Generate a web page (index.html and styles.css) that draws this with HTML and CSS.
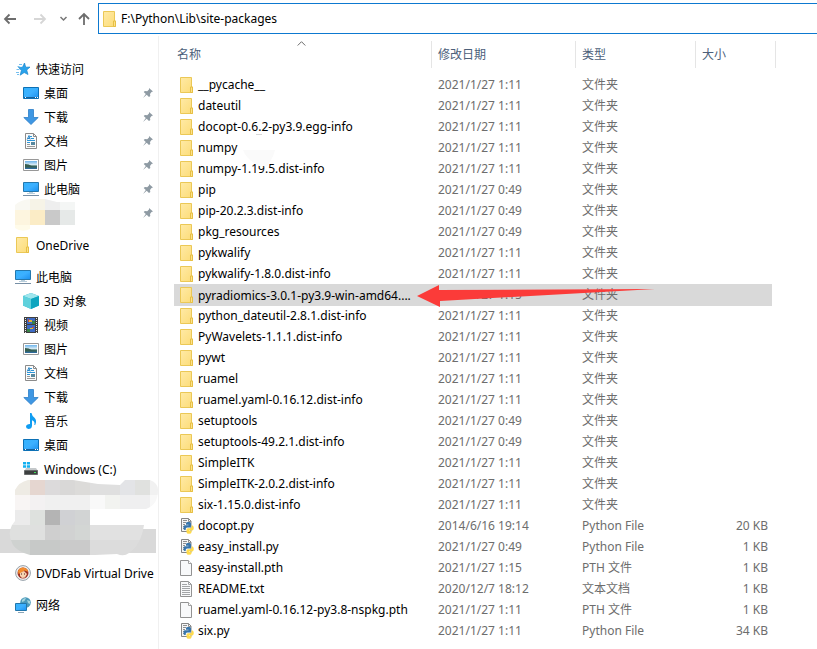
FILE: index.html
```html
<!DOCTYPE html>
<html lang="zh-CN">
<head>
    <meta charset="UTF-8">
    <meta name="viewport" content="width=device-width, initial-scale=1.0">
    <title>site-packages</title>
    <link rel="stylesheet" href="styles.css">
</head>
<body>
    <!-- 图标 -->
    <svg class="defs" width="0" height="0">
        <defs>
            <linearGradient id="gFolder" x1="0" y1="0" x2="1" y2="1"><stop offset="0" stop-color="#ffeaa6"/><stop offset="1" stop-color="#fcdc78"/></linearGradient>
            <linearGradient id="gBlue" x1="0" y1="0" x2="1" y2="1"><stop offset="0" stop-color="#35b4fd"/><stop offset=".5" stop-color="#3cb0ff"/><stop offset="1" stop-color="#1a8fee"/></linearGradient>
            <linearGradient id="gSky" x1="0" y1="0" x2="0" y2="1"><stop offset="0" stop-color="#6db4ec"/><stop offset=".5" stop-color="#e2f0f6"/><stop offset=".6" stop-color="#3f6e66"/><stop offset="1" stop-color="#2c6aa5"/></linearGradient>
        </defs>
        <symbol id="folder" viewBox="0 0 14 16">
            <path d="M.5.5h11v9.500h1v5.500H.5z" fill="url(#gFolder)" stroke="#ebc856"/>
            <path d="M10.500 15.500v-5.500h2v5.500z" fill="#fde28a" stroke="#e6bf45"/>
        </symbol>
        <symbol id="file" viewBox="0 0 14 16">
            <path d="M.5.500h8l3 3v12H.5z" fill="#f8f9fa" stroke="#929292"/>
            <path d="M8.500.500v3h3" fill="#fff" stroke="#a0a0a0"/>
        </symbol>
        <symbol id="text" viewBox="0 0 14 16">
            <path d="M.5.500h8l3 3v12H.5z" fill="#f8f9fa" stroke="#929292"/>
            <path d="M8.500.500v3h3M2 3.500h5M2 5.500h8M2 7.500h8M2 9.500h8M2 11.500h8M2 13.500h8" fill="none" stroke="#a3a5a7"/>
        </symbol>
        <symbol id="py" viewBox="0 0 14 16">
            <path d="M1.500.500h7l2.500 2.500v10.500H1.500z" fill="#f5f6f6" stroke="#858585"/>
            <path d="M8.500.500v3H11M3 2.500h4M3 4.500h3M3 6.500h2M3 8.500h2M3 10.500h2" fill="none" stroke="#8f8f8f"/>
            <path d="M6 5.300q0-1.300 2-1.300h1.500q1.500 0 1.500 1.500v2.500q0 1.500-1.500 1.500H7q-1.300 0-1.300 1.500v1H4.500Q3.500 12 3.500 9.500T5 7.300h3.500v-.600H6z" fill="#3875ab"/>
            <path d="M11.600 7.500h1q1.200.600 1.200 2.600t-1.300 2.300H9v.600h2.500v1.200q0 1.500-2.500 1.500t-2.500-1.500v-2.400q0-1.500 1.500-1.500h2.200q1.400 0 1.400-1.400z" fill="#ffdb4c"/>
        </symbol>
        <symbol id="star" viewBox="0 0 16 16">
            <path d="M9.500 2l1.200 4.200 4.300-.1-3.300 2.900 1.300 4.500-3.800-2-4 2.700 1.200-4.900L3.500 6.400l4-.1z" fill="#29a3ec" stroke="#1b85cb" stroke-width=".7"/>
            <path d="M4 3.500h3M2.500 5.500h2M1.500 8.500h3M1 11.500h3M2 13.500h2" stroke="#65b8ec" stroke-width=".9"/>
        </symbol>
        <symbol id="desktop" viewBox="0 0 16 16">
            <path d="M.5 2.500h15v11H.5z" fill="url(#gBlue)" stroke="#0c70b5"/>
            <path d="M1 12.500h14" stroke="#176099"/>
            <path d="M2 12.500h1M12 12.500h1M14 12.500h1" stroke="#fff"/>
        </symbol>
        <symbol id="down" viewBox="0 0 16 16">
            <path d="M5.500.500h5v8h4.700L8 15.500.800 8.500h4.700z" fill="#3f97e3" stroke="#2c7ec8" stroke-width=".8"/>
        </symbol>
        <symbol id="doc" viewBox="0 0 16 16">
            <path d="M2.500.500h8l3 3v12h-11z" fill="#fbfbfb" stroke="#8b8b8b"/>
            <path d="M10.500.500v3h3" fill="none" stroke="#8b8b8b"/>
            <path d="M7 3.500h2M4 7.500h8M8 5.500h3M4 9.500h3" stroke="#2e96d8"/>
            <path d="M4.200 6.500L6 2.500l1.200 4M4.800 5.500h2" stroke="#2a86c7" fill="none"/>
            <path d="M4 11.500h3M4 13.500h8" stroke="#999"/>
            <path d="M8 9h4v3H8z" fill="#58889e"/>
        </symbol>
        <symbol id="pic" viewBox="0 0 16 16">
            <path d="M.5 2.500h15v11H.5z" fill="#fff" stroke="#989898"/>
            <path d="M2 4h12v8H2z" fill="url(#gSky)"/>
            <path d="M2 7q4 0 7 2.200l5 .3v1H2z" fill="#365e51"/>
        </symbol>
        <symbol id="pc" viewBox="0 0 16 16">
            <path d="M.5 1.500h15v9H.5z" fill="url(#gBlue)" stroke="#2478ae"/>
            <path d="M6 11.500h4M4 12.500h8" stroke="#b9cedb"/>
            <path d="M0 14.500h16" stroke="#778fa5"/>
        </symbol>
        <symbol id="cube" viewBox="0 0 16 16">
            <path d="M8 0l8 3v9.500L8 16 0 12.500V3z" fill="#25b3cc"/>
            <path d="M0 3l8-3 8 3-8 3z" fill="#a0e6ed"/>
            <path d="M0 3l8 3v10l-8-3.500z" fill="#5fd1dc"/>
            <path d="M8 6l8-3v9.500L8 16z" fill="#0ea5bf"/>
        </symbol>
        <symbol id="film" viewBox="0 0 16 16">
            <path d="M1 0h14v16H1z" fill="#404040"/>
            <path d="M2.500 1v15M13.500 1v15" stroke="#eee" stroke-dasharray="1 1"/>
            <path d="M4 1h8v6H4zM4 8h8v7H4z" fill="#3d6ac4"/>
            <path d="M6 3h3v2H6zM7 11h3v1H7z" fill="#e4b53a"/>
            <path d="M9 4h3v3H9zM4 12h3v3H4z" fill="#378247"/>
            <path d="M5 2h1v3H5zM9 10h2v1H9z" fill="#cf4c35"/>
        </symbol>
        <symbol id="music" viewBox="0 0 16 16">
            <path d="M7 0h1.500q.5 3 3 4.800 2.800 2.700.7 7.200h-.9q1-3.500-2.300-4.800v5.500Q8.700 16 5.500 16 3 15.800 3 13.700 3.200 11 7 11z" fill="#109df2"/>
        </symbol>
        <symbol id="drive" viewBox="0 0 16 16">
            <path d="M0 1h3v2.500H0zM3.800 1H7v2.500H3.800zM0 4.300h3v2.500H0zM3.800 4.300H7v2.500H3.800z" fill="#13b0f0"/>
            <path d="M3 7h10l2 3H1.500z" fill="#c4c8ca"/>
            <path d="M1.500 9.500h13v4h-13z" fill="#3d3f40" stroke="#676a6b"/>
            <path d="M11 11.500h2" stroke="#3fdf5c"/>
        </symbol>
        <symbol id="dvd" viewBox="0 0 16 16">
            <circle cx="8" cy="8" r="7.400" fill="#f4f2f0" stroke="#95a0a9"/>
            <circle cx="8" cy="8" r="5.500" fill="#9c2f22"/>
            <path d="M3 6q2-4 6-3.300 4 .8 4 4L9.500 5.500 7 7.500 3.500 9z" fill="#f28c2e"/>
            <path d="M5 8l4-2 3 3-2 3.500-3 .5-2-2z" fill="#f7d3b1"/>
            <path d="M6 8.500h1v1H6zM9 8.500h1v1H9z" fill="#4f211b"/>
        </symbol>
        <symbol id="net" viewBox="0 0 16 16">
            <circle cx="10.500" cy="5.500" r="5.300" fill="#4b9abb"/>
            <path d="M7 3q2-2.300 4-2l-1.500 3L7 5zM12 3l3 1v3l-2-1z" fill="#a3d4de"/>
            <path d="M.5 6.500h11v7H.5z" fill="url(#gBlue)" stroke="#2276ab"/>
            <path d="M3 15.500h6" stroke="#8ba6b8"/>
        </symbol>
        <symbol id="pin" viewBox="0 0 10 10">
            <path d="M6 0l4 3.500-1.500.500-1.500 2 .3 2L6 9 3.700 6.800 0 10l2.800-4L.7 4l1.200-1 2.300.200L6 1.500z" fill="#8e9aa3"/>
        </symbol>
    </svg>

    <!-- 地址栏 -->
    <div class="topbar">
        <svg class="arrows" width="98" height="36" fill="none">
            <path d="M5 19h11M9.500 14.500L5 19l4.500 4.500" stroke="#6d6d6d" stroke-width="1.800"/>
            <path d="M34 19h11M40.500 14.500L45 19l-4.500 4.500" stroke="#d6d6d6" stroke-width="1.800"/>
            <path d="M60.500 17l3 3 3-3" stroke="#777" stroke-width="1.500"/>
            <path d="M84 25V14M79 19l5-5 5 5" stroke="#6d6d6d" stroke-width="1.800"/>
        </svg>
        <div class="address">
            <svg class="ico-file"><use href="#folder"/></svg>
            <span>F:\Python\Lib\site-packages</span>
        </div>
    </div>

    <div class="main">
        <!-- 左侧导航 -->
        <div class="sidebar">
            <div class="item"><svg class="ico"><use href="#star"/></svg><span>快速访问</span></div>
            <div class="item sub"><svg class="ico"><use href="#desktop"/></svg><span>桌面</span><svg class="pin"><use href="#pin"/></svg></div>
            <div class="item sub"><svg class="ico"><use href="#down"/></svg><span>下载</span><svg class="pin"><use href="#pin"/></svg></div>
            <div class="item sub"><svg class="ico"><use href="#doc"/></svg><span>文档</span><svg class="pin"><use href="#pin"/></svg></div>
            <div class="item sub"><svg class="ico"><use href="#pic"/></svg><span>图片</span><svg class="pin"><use href="#pin"/></svg></div>
            <div class="item sub"><svg class="ico"><use href="#pc"/></svg><span>此电脑</span><svg class="pin"><use href="#pin"/></svg></div>
            <div class="item sub"><svg class="pin"><use href="#pin"/></svg></div>
            <div class="item group"><svg class="ico"><use href="#folder"/></svg><span class="onedrive">OneDrive</span></div>
            <div class="item group"><svg class="ico"><use href="#pc"/></svg><span>此电脑</span></div>
            <div class="item sub"><svg class="ico"><use href="#cube"/></svg><span>3D 对象</span></div>
            <div class="item sub"><svg class="ico"><use href="#film"/></svg><span>视频</span></div>
            <div class="item sub"><svg class="ico"><use href="#pic"/></svg><span>图片</span></div>
            <div class="item sub"><svg class="ico"><use href="#doc"/></svg><span>文档</span></div>
            <div class="item sub"><svg class="ico"><use href="#down"/></svg><span>下载</span></div>
            <div class="item sub"><svg class="ico"><use href="#music"/></svg><span>音乐</span></div>
            <div class="item sub"><svg class="ico"><use href="#desktop"/></svg><span>桌面</span></div>
            <div class="item sub"><svg class="ico"><use href="#drive"/></svg><span>Windows (C:)</span></div>
            <div class="item"></div>
            <div class="item"></div>
            <div class="item current"></div>
            <div class="item group"><svg class="ico"><use href="#dvd"/></svg><span>DVDFab Virtual Drive</span></div>
            <div class="item group"><svg class="ico"><use href="#net"/></svg><span>网络</span></div>
        </div>

        <!-- 文件列表 -->
        <div class="files">
            <div class="row head">
                <span class="name">名称</span><span class="date">修改日期</span><span class="type">类型</span><span class="size">大小</span>
                <svg class="sort" width="9" height="5"><path d="M.7 4.500l3.800-3.800 3.800 3.800" fill="none" stroke="#6a6a6a"/></svg>
            </div>
            <div class="row"><span class="name"><svg class="ico-file"><use href="#folder"/></svg>__pycache__</span><span class="date">2021/1/27 1:11</span><span class="type">文件夹</span><span class="size"></span></div>
            <div class="row"><span class="name"><svg class="ico-file"><use href="#folder"/></svg>dateutil</span><span class="date">2021/1/27 1:11</span><span class="type">文件夹</span><span class="size"></span></div>
            <div class="row"><span class="name"><svg class="ico-file"><use href="#folder"/></svg>docopt-0.6.2-py3.9.egg-info</span><span class="date">2021/1/27 1:11</span><span class="type">文件夹</span><span class="size"></span></div>
            <div class="row"><span class="name"><svg class="ico-file"><use href="#folder"/></svg>numpy</span><span class="date">2021/1/27 1:11</span><span class="type">文件夹</span><span class="size"></span></div>
            <div class="row"><span class="name"><svg class="ico-file"><use href="#folder"/></svg>numpy-1.19.5.dist-info</span><span class="date">2021/1/27 1:11</span><span class="type">文件夹</span><span class="size"></span></div>
            <div class="row"><span class="name"><svg class="ico-file"><use href="#folder"/></svg>pip</span><span class="date">2021/1/27 0:49</span><span class="type">文件夹</span><span class="size"></span></div>
            <div class="row"><span class="name"><svg class="ico-file"><use href="#folder"/></svg>pip-20.2.3.dist-info</span><span class="date">2021/1/27 0:49</span><span class="type">文件夹</span><span class="size"></span></div>
            <div class="row"><span class="name"><svg class="ico-file"><use href="#folder"/></svg>pkg_resources</span><span class="date">2021/1/27 0:49</span><span class="type">文件夹</span><span class="size"></span></div>
            <div class="row"><span class="name"><svg class="ico-file"><use href="#folder"/></svg>pykwalify</span><span class="date">2021/1/27 1:11</span><span class="type">文件夹</span><span class="size"></span></div>
            <div class="row"><span class="name"><svg class="ico-file"><use href="#folder"/></svg>pykwalify-1.8.0.dist-info</span><span class="date">2021/1/27 1:11</span><span class="type">文件夹</span><span class="size"></span></div>
            <div class="row selected"><span class="name"><svg class="ico-file"><use href="#folder"/></svg>pyradiomics-3.0.1-py3.9-win-amd64....</span><span class="date">2021/1/27 1:15</span><span class="type">文件夹</span><span class="size"></span></div>
            <div class="row"><span class="name"><svg class="ico-file"><use href="#folder"/></svg>python_dateutil-2.8.1.dist-info</span><span class="date">2021/1/27 1:11</span><span class="type">文件夹</span><span class="size"></span></div>
            <div class="row"><span class="name"><svg class="ico-file"><use href="#folder"/></svg>PyWavelets-1.1.1.dist-info</span><span class="date">2021/1/27 1:11</span><span class="type">文件夹</span><span class="size"></span></div>
            <div class="row"><span class="name"><svg class="ico-file"><use href="#folder"/></svg>pywt</span><span class="date">2021/1/27 1:11</span><span class="type">文件夹</span><span class="size"></span></div>
            <div class="row"><span class="name"><svg class="ico-file"><use href="#folder"/></svg>ruamel</span><span class="date">2021/1/27 1:11</span><span class="type">文件夹</span><span class="size"></span></div>
            <div class="row"><span class="name"><svg class="ico-file"><use href="#folder"/></svg>ruamel.yaml-0.16.12.dist-info</span><span class="date">2021/1/27 1:11</span><span class="type">文件夹</span><span class="size"></span></div>
            <div class="row"><span class="name"><svg class="ico-file"><use href="#folder"/></svg>setuptools</span><span class="date">2021/1/27 0:49</span><span class="type">文件夹</span><span class="size"></span></div>
            <div class="row"><span class="name"><svg class="ico-file"><use href="#folder"/></svg>setuptools-49.2.1.dist-info</span><span class="date">2021/1/27 0:49</span><span class="type">文件夹</span><span class="size"></span></div>
            <div class="row"><span class="name"><svg class="ico-file"><use href="#folder"/></svg>SimpleITK</span><span class="date">2021/1/27 1:11</span><span class="type">文件夹</span><span class="size"></span></div>
            <div class="row"><span class="name"><svg class="ico-file"><use href="#folder"/></svg>SimpleITK-2.0.2.dist-info</span><span class="date">2021/1/27 1:11</span><span class="type">文件夹</span><span class="size"></span></div>
            <div class="row"><span class="name"><svg class="ico-file"><use href="#folder"/></svg>six-1.15.0.dist-info</span><span class="date">2021/1/27 1:11</span><span class="type">文件夹</span><span class="size"></span></div>
            <div class="row"><span class="name"><svg class="ico-file"><use href="#py"/></svg>docopt.py</span><span class="date">2014/6/16 19:14</span><span class="type">Python File</span><span class="size">20 KB</span></div>
            <div class="row"><span class="name"><svg class="ico-file"><use href="#py"/></svg>easy_install.py</span><span class="date">2021/1/27 0:49</span><span class="type">Python File</span><span class="size">1 KB</span></div>
            <div class="row"><span class="name"><svg class="ico-file"><use href="#file"/></svg>easy-install.pth</span><span class="date">2021/1/27 1:15</span><span class="type">PTH 文件</span><span class="size">1 KB</span></div>
            <div class="row"><span class="name"><svg class="ico-file"><use href="#text"/></svg>README.txt</span><span class="date">2020/12/7 18:12</span><span class="type">文本文档</span><span class="size">1 KB</span></div>
            <div class="row"><span class="name"><svg class="ico-file"><use href="#file"/></svg>ruamel.yaml-0.16.12-py3.8-nspkg.pth</span><span class="date">2021/1/27 1:11</span><span class="type">PTH 文件</span><span class="size">1 KB</span></div>
            <div class="row"><span class="name"><svg class="ico-file"><use href="#py"/></svg>six.py</span><span class="date">2021/1/27 1:11</span><span class="type">Python File</span><span class="size">34 KB</span></div>
        </div>
    </div>

    <!-- 马赛克和红色箭头 -->
    <svg class="overlay" width="817" height="649">
        <clipPath id="blob1"><path d="M15 205q5-5 15-6h15l12 3 3 0h15v23H60l-30 1v3q-8 4-15-1z"/></clipPath>
        <g clip-path="url(#blob1)">
            <path d="M15 195h15v15H15z" fill="#f9f8f2"/><path d="M30 195h15v15H30z" fill="#f6f3e7"/><path d="M45 195h15v15H45z" fill="#eeeeee"/><path d="M60 195h15v15H60z" fill="#f4f6f5"/>
            <path d="M15 210h15v15H15z" fill="#fdf5df"/><path d="M30 210h15v15H30z" fill="#fbecc6"/><path d="M45 210h15v15H45z" fill="#c9c9c9"/><path d="M60 210h15v15H60z" fill="#e6e9e8"/>
            <path d="M15 225h15v6H15z" fill="#fffbe9"/>
        </g>
        <clipPath id="blob2"><path d="M15 490q4-8 13-10h45l25 4 22 1 5-5h25q8 3 8 10 0 15-12 19H90v16h54q-3 20-15 28-5 4-12 1l-22 1H30q-12-3-17-10-6-10-1-20l3-4z"/></clipPath>
        <g clip-path="url(#blob2)">
            <path d="M0 480h30v15H0z" fill="#eeebe4"/><path d="M30 480h15v15H30z" fill="#e5d6d0"/><path d="M45 480h15v15H45z" fill="#dcdadb"/><path d="M60 480h15v15H60z" fill="#d9d8d7"/><path d="M75 480h15v15H75z" fill="#dcdbd9"/><path d="M90 480h30v15H90z" fill="#dfdfdf"/><path d="M120 480h15v15h-15z" fill="#e3e4e7"/><path d="M135 480h15v15h-15z" fill="#e0e1df"/><path d="M150 480h15v15h-15z" fill="#f1f1f1"/>
            <path d="M0 495h30v15H0z" fill="#f8f5f4"/><path d="M30 495h15v15H30z" fill="#f3f1f2"/><path d="M45 495h45v15H45z" fill="#f0f0f0"/><path d="M90 495h15v15H90z" fill="#f9f9f9"/><path d="M105 495h15v15h-15z" fill="#f2f3f0"/><path d="M120 495h30v15h-30z" fill="#efeff0"/><path d="M150 495h15v15h-15z" fill="#f8f8f8"/>
            <path d="M0 510h30v15H0z" fill="#ebebeb"/><path d="M30 510h15v15H30z" fill="#dee1de"/><path d="M45 510h15v15H45z" fill="#b4b4b4"/><path d="M60 510h15v15H60z" fill="#d0d1d4"/><path d="M75 510h15v15H75z" fill="#d2d4d4"/>
            <path d="M0 525h45v15H0z" fill="#dfe0df"/><path d="M45 525h15v15H45z" fill="#cfcfcf"/><path d="M60 525h15v15H60z" fill="#d1d2d2"/><path d="M75 525h15v15H75z" fill="#d3d6d4"/><path d="M90 525h60v15H90z" fill="#e1e1e1"/>
            <path d="M0 540h30v20H0z" fill="#cfd2d0"/><path d="M30 540h30v20H30z" fill="#c7c9c8"/><path d="M60 540h30v20H60z" fill="#cacaca"/><path d="M90 540h60v20H90z" fill="#dcdcdc"/>
        </g>
        <path d="M243 150h32q-2 8-6 13v3h-10l-5-3q-8-5-11-13z" fill="#fafafa"/>
        <path d="M256 134h6v1h-6z" fill="#d8d8d8"/>
        <path d="M417 296l22-11v5l216-1-215 12v6z" fill="#fb3b39"/>
    </svg>
</body>
</html>
```
FILE: styles.css
```css
*{
    margin: 0;
    padding: 0;
    box-sizing: border-box;
}
body{
    width: 817px;
    height: 649px;
    overflow: hidden;
    background-color: #fff;
    color: #000;
    font: 12px/21px "Noto Sans", "Noto Sans CJK SC", sans-serif;
    position: relative;
}
svg{
    flex: none;
}
.defs{
    position: absolute;
}
.topbar{
    display: flex;
    height: 36px;
}
.address{
    flex: 1;
    display: flex;
    align-items: center;
    height: 31px;
    margin-top: 3px;
    padding-left: 4px;
    border: 1px solid #0d79d0;
    border-right: none;
}
.ico-file{
    width: 14px;
    height: 16px;
    margin-right: 4px;
}
.main{
    display: flex;
    height: 613px;
}
/* 左侧导航 */
.sidebar{
    width: 159px;
    padding-top: 21px;
    margin-top: 5px;
    margin-top: 0;
    border-right: 1px solid #f0f0f0;
}
.item{
    display: flex;
    align-items: center;
    width: 156px;
    height: 24px;
    padding-left: 15px;
    white-space: nowrap;
    overflow: hidden;
}
.item .ico{
    width: 16px;
    height: 16px;
    margin-right: 5px;
}
.sub{
    padding-left: 23px;
}
.group{
    margin-top: 8px;
}
.current{
    background-color: #d9d9d9;
}
.pin{
    width: 10px;
    height: 10px;
    margin-left: auto;
    margin-right: 3px;
}
/* 文件列表 */
.files{
    flex: 1;
    padding: 5px 0 0 15px;
}
.row{
    display: flex;
    width: 598px;
    height: 21px;
    white-space: nowrap;
    color: #6d6d6d;
}
.row .name{
    display: flex;
    align-items: center;
    width: 257px;
    padding-left: 6px;
    color: #000;
}
.row .date{
    width: 144px;
    padding-left: 7px;
}
.row .type{
    width: 120px;
    padding-left: 7px;
}
.row .size{
    width: 77px;
    padding-right: 4px;
    text-align: right;
}
.selected{
    height: 22px;
    margin-bottom: -1px;
    background-color: #d9d9d9;
}
.head{
    position: relative;
    width: 602px;
    height: 27px;
    margin-bottom: 6px;
    line-height: 27px;
}
.head span{
    color: #4c607a;
    border-right: 1px solid #e5e5e5;
}
.head .name{
    width: 258px;
    padding-left: 3px;
    color: #4c607a;
}
.head .date, .head .type{
    padding-left: 6px;
}
.head .size{
    width: 80px;
    padding-left: 6px;
    text-align: left;
}
.sort{
    position: absolute;
    left: 123px;
    top: 0;
}
.overlay{
    position: absolute;
    left: 0;
    top: 0;
}
```
